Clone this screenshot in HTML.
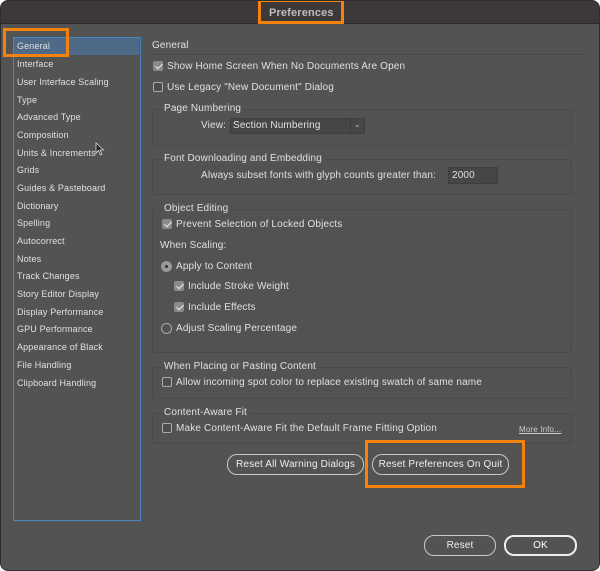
<!DOCTYPE html>
<html><head><style>
*{margin:0;padding:0;box-sizing:border-box}
body{width:600px;height:571px;background:#fff;font-family:"Liberation Sans",sans-serif;color:#e0e0e0;font-size:10px;position:relative;overflow:hidden}
.win{position:absolute;left:0;top:0;width:600px;height:571px;background:#535353;border:1px solid #2e2e2e;border-radius:8px;overflow:hidden}
.tb{position:absolute;left:0;top:0;width:600px;height:23px;background:#3c3938;border-bottom:1px solid #2a2a2a}
.a{position:absolute;white-space:nowrap;line-height:12px;letter-spacing:0.15px}
.lbl{background:#535353;padding:0 2px;margin-left:-2px}
.side{position:absolute;left:12px;top:36px;width:128px;height:484px;border:1.5px solid #4a86c4}
.sel{position:absolute;left:13px;top:37px;width:125px;height:17px;background:#4f6a86}
.or{position:absolute;border:3px solid #f5820f}
.grp{position:absolute;border:1px solid #4a4a4a;border-radius:3px;background:#525252}
.cb{position:absolute;width:10px;height:10px;border:1px solid #aaa;border-radius:2px;background:#4d4d4d}
.cb.on{background:#8a8a8a;border-color:#8a8a8a}
.cb.on::after{content:"";position:absolute;left:2.5px;top:0px;width:3px;height:6px;border:solid #eee;border-width:0 1.5px 1.5px 0;transform:rotate(45deg)}
.rd{position:absolute;width:11px;height:11px;border:1px solid #aaa;border-radius:50%}
.rd.on{background:#999;border-color:#999}
.rd.on::after{content:"";position:absolute;left:3px;top:3px;width:3px;height:3px;border-radius:50%;background:#333}
.btn{position:absolute;border:1.5px solid #c8c8c8;border-radius:10px;display:flex;align-items:center;justify-content:center;color:#eee;letter-spacing:0.15px}
</style></head><body>
<div class="win">
<div class="tb"></div>
<div class="a" style="left:268px;top:6px;font-weight:bold;color:#bdbdbd;font-size:11px">Preferences</div>
<div class="or" style="left:257px;top:-2px;width:86px;height:25px"></div>

<div class="sel"></div>
<div class="side"></div>
<div class="or" style="left:2px;top:27px;width:66px;height:29px"></div>
<div class="a" style="left:16px;top:39px;font-size:9px">General</div>
<div class="a" style="left:16px;top:57px;font-size:9px">Interface</div>
<div class="a" style="left:16px;top:75px;font-size:9px">User Interface Scaling</div>
<div class="a" style="left:16px;top:93px;font-size:9px">Type</div>
<div class="a" style="left:16px;top:110px;font-size:9px">Advanced Type</div>
<div class="a" style="left:16px;top:128px;font-size:9px">Composition</div>
<div class="a" style="left:16px;top:146px;font-size:9px">Units &amp; Increments</div>
<div class="a" style="left:16px;top:163px;font-size:9px">Grids</div>
<div class="a" style="left:16px;top:181px;font-size:9px">Guides &amp; Pasteboard</div>
<div class="a" style="left:16px;top:199px;font-size:9px">Dictionary</div>
<div class="a" style="left:16px;top:216px;font-size:9px">Spelling</div>
<div class="a" style="left:16px;top:234px;font-size:9px">Autocorrect</div>
<div class="a" style="left:16px;top:252px;font-size:9px">Notes</div>
<div class="a" style="left:16px;top:269px;font-size:9px">Track Changes</div>
<div class="a" style="left:16px;top:287px;font-size:9px">Story Editor Display</div>
<div class="a" style="left:16px;top:305px;font-size:9px">Display Performance</div>
<div class="a" style="left:16px;top:322px;font-size:9px">GPU Performance</div>
<div class="a" style="left:16px;top:340px;font-size:9px">Appearance of Black</div>
<div class="a" style="left:16px;top:358px;font-size:9px">File Handling</div>
<div class="a" style="left:16px;top:376px;font-size:9px">Clipboard Handling</div>
<svg style="position:absolute;left:94px;top:141px" width="10" height="14" viewBox="0 0 10 14"><path d="M1 1 L1 11 L3.5 8.5 L5.5 13 L7 12.3 L5 8 L8.5 8 Z" fill="#222" stroke="#ddd" stroke-width="0.8"/></svg>

<div class="a" style="left:151px;top:39px">General</div>
<div style="position:absolute;left:150px;top:53px;width:436px;height:1px;background:#4a4a4a"></div>
<div class="cb on" style="left:152px;top:60px"></div><div class="a" style="left:166px;top:60px">Show Home Screen When No Documents Are Open</div>
<div class="cb" style="left:152px;top:81px"></div><div class="a" style="left:166px;top:81px">Use Legacy "New Document" Dialog</div>

<div class="grp" style="left:151px;top:108px;width:420px;height:37px"></div>
<div class="a lbl" style="left:163px;top:102px">Page Numbering</div>
<div class="a" style="left:200px;top:119px">View:</div>
<div style="position:absolute;left:229px;top:117px;width:135px;height:16px;border:1px solid #3e3e3e;background:#464646"></div>
<div style="position:absolute;left:349px;top:118px;width:1px;height:14px;background:#3a3a3a"></div>
<div class="a" style="left:232px;top:119px">Section Numbering</div>
<div class="a" style="left:353px;top:118px;font-size:8px;color:#bbb">⌄</div>

<div class="grp" style="left:151px;top:158px;width:420px;height:36px"></div>
<div class="a lbl" style="left:163px;top:152px">Font Downloading and Embedding</div>
<div class="a" style="left:200px;top:169px">Always subset fonts with glyph counts greater than:</div>
<div style="position:absolute;left:447px;top:166px;width:50px;height:17px;border:1px solid #3e3e3e;background:#464646"></div>
<div class="a" style="left:451px;top:169px">2000</div>

<div class="grp" style="left:151px;top:208px;width:420px;height:144px"></div>
<div class="a lbl" style="left:163px;top:202px">Object Editing</div>
<div class="cb on" style="left:161px;top:218px"></div><div class="a" style="left:175px;top:218px">Prevent Selection of Locked Objects</div>
<div class="a" style="left:159px;top:239px">When Scaling:</div>
<div class="rd on" style="left:160px;top:260px"></div><div class="a" style="left:175px;top:260px">Apply to Content</div>
<div class="cb on" style="left:173px;top:280px"></div><div class="a" style="left:187px;top:280px">Include Stroke Weight</div>
<div class="cb on" style="left:173px;top:301px"></div><div class="a" style="left:187px;top:301px">Include Effects</div>
<div class="rd" style="left:160px;top:322px"></div><div class="a" style="left:175px;top:322px">Adjust Scaling Percentage</div>

<div class="grp" style="left:151px;top:366px;width:420px;height:32px"></div>
<div class="a lbl" style="left:163px;top:360px">When Placing or Pasting Content</div>
<div class="cb" style="left:161px;top:376px"></div><div class="a" style="left:175px;top:376px">Allow incoming spot color to replace existing swatch of same name</div>

<div class="grp" style="left:151px;top:412px;width:420px;height:31px"></div>
<div class="a lbl" style="left:163px;top:406px">Content-Aware Fit</div>
<div class="cb" style="left:161px;top:422px"></div><div class="a" style="left:175px;top:422px">Make Content-Aware Fit the Default Frame Fitting Option</div>
<div class="a" style="left:518px;top:423px;font-size:8px;text-decoration:underline;color:#ccc">More Info...</div>

<div class="btn" style="left:226px;top:453px;width:137px;height:21px">Reset All Warning Dialogs</div>
<div class="btn" style="left:371px;top:453px;width:137px;height:21px">Reset Preferences On Quit</div>
<div class="or" style="left:364px;top:439px;width:160px;height:48px"></div>

<div class="btn" style="left:423px;top:534px;width:72px;height:21px">Reset</div>
<div class="btn" style="left:503px;top:534px;width:73px;height:21px;border:2px solid #eee;color:#fff">OK</div>
</div>
</body></html>
